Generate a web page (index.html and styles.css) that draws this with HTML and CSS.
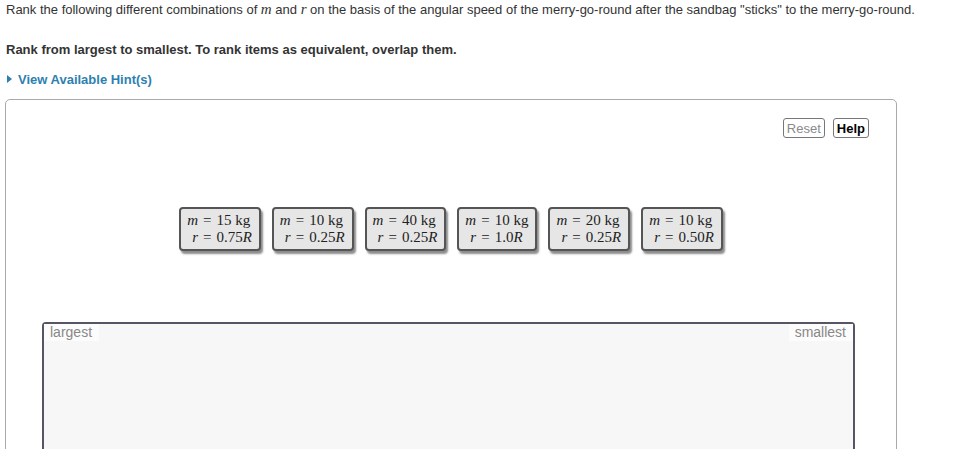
FILE: index.html
```html
<!DOCTYPE html>
<html>
<head>
  <meta charset="UTF-8">
  <title>Ranking</title>
  <link rel="stylesheet" href="styles.css">
</head>
<body>
  <p class="intro">Rank the following different combinations of <i class="mv">m</i> and <i class="mv">r</i> on the basis of the angular speed of the merry-go-round after the sandbag "sticks" to the merry-go-round.</p>
  <p class="task">Rank from largest to smallest. To rank items as equivalent, overlap them.</p>
  <a class="hint" href="#"><span class="arrow"></span>View Available Hint(s)</a>

  <div class="box">
    <div class="tools">
      <button class="btn reset">Reset</button>
      <button class="btn help">Help</button>
    </div>

    <div class="tiles">
      <div class="tile"><i>m</i><span>=</span><b>15 kg</b><i>r</i><span>=</span><b>0.75<i>R</i></b></div>
      <div class="tile"><i>m</i><span>=</span><b>10 kg</b><i>r</i><span>=</span><b>0.25<i>R</i></b></div>
      <div class="tile"><i>m</i><span>=</span><b>40 kg</b><i>r</i><span>=</span><b>0.25<i>R</i></b></div>
      <div class="tile"><i>m</i><span>=</span><b>10 kg</b><i>r</i><span>=</span><b>1.0<i>R</i></b></div>
      <div class="tile"><i>m</i><span>=</span><b>20 kg</b><i>r</i><span>=</span><b>0.25<i>R</i></b></div>
      <div class="tile"><i>m</i><span>=</span><b>10 kg</b><i>r</i><span>=</span><b>0.50<i>R</i></b></div>
    </div>

    <div class="drop">
      <span class="lbl">largest</span>
      <span class="lbl">smallest</span>
    </div>
  </div>
</body>
</html>
```

FILE: styles.css
```css
body {
    margin: 0;
    padding: 0 6px 0 5px;
    font-family: "Liberation Sans", Arial, sans-serif;
    font-size: 13px;
    color: #333;
    background: #fff;
}
.intro {
    margin: 2px 0 0 1px;
    line-height: 15px;
}
.mv {
    font-family: "Liberation Serif", serif;
    font-size: 15px;
}
.task {
    margin: 25px 0 0 1px;
    font-weight: bold;
    line-height: 15px;
}
.hint {
    display: block;
    margin: 15px 0 0 1px;
    color: #2e7fb0;
    font-weight: bold;
    font-size: 13px;
    line-height: 15px;
    text-decoration: none;
}
.arrow {
    display: inline-block;
    width: 0;
    height: 0;
    border-top: 4px solid transparent;
    border-bottom: 4px solid transparent;
    border-left: 5px solid #2e7fb0;
    margin: 0 6px 1px 1px;
}
.box {
    margin-top: 12px;
    width: 890px;
    height: 400px;
    border: 1px solid #aaa;
    border-radius: 5px;
}
.tools {
    display: flex;
    justify-content: flex-end;
    gap: 8px;
    padding: 18px 27px 0 0;
}
.btn {
    font-family: "Liberation Sans", Arial, sans-serif;
    font-size: 13px;
    background: #fff;
    border: 1px solid #777;
    border-radius: 3px;
    height: 20px;
    padding: 0 3px;
    line-height: 17px;
}
.reset {
    color: #8a8a8a;
}
.help {
    color: #000;
    font-weight: bold;
}
.tiles {
    display: flex;
    justify-content: center;
    gap: 11px;
    margin-top: 69px;
}
.tile {
    display: grid;
    grid-template-columns: auto auto auto;
    column-gap: 5px;
    align-items: baseline;
    background: #e6e6e6;
    border: 2px solid #555;
    border-radius: 4px;
    box-shadow: 2px 3px 2px rgba(0, 0, 0, 0.45);
    padding: 3px 7px 3px 6px;
    font-family: "Liberation Serif", serif;
    font-size: 15px;
    line-height: 17px;
    color: #222;
}
.tile > i {
    text-align: right;
}
.tile b {
    font-weight: normal;
}
.drop {
    display: flex;
    justify-content: space-between;
    margin: 71px 0 0 36px;
    width: 809px;
    height: 200px;
    background: #f7f7f7;
    border: 2px solid #555566;
    border-radius: 4px;
}
.lbl {
    align-self: flex-start;
    background: #fcfcfc;
    color: #888;
    font-size: 14px;
    line-height: 17px;
    padding: 0 7px 0 6px;
}
```
